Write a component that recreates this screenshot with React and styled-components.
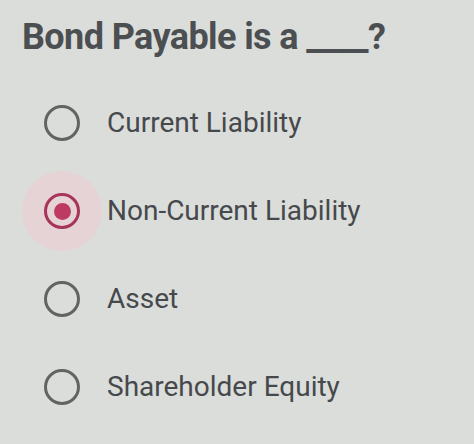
import styled, { createGlobalStyle } from "styled-components";

const GlobalStyle = createGlobalStyle`
    html, body {
        margin: 0;
        padding: 0;
        background: #dbddda;
    }
    body {
        font-family: Roboto, "Noto Sans", sans-serif;
    }
`;

const options = [
    { label: "Current Liability", selected: false },
    { label: "Non-Current Liability", selected: true },
    { label: "Asset", selected: false },
    { label: "Shareholder Equity", selected: false },
];

export default function App() {
    return (
        <>
            <GlobalStyle />
            <PAGE>
                <TITLE>Bond Payable is a ____?</TITLE>
                <OPTIONS>
                    {options.map((opt) => (
                        <ROW key={opt.label}>
                            <RADIO>
                                {opt.selected && <HALO />}
                                <RING selected={opt.selected}>
                                    {opt.selected && <DOT />}
                                </RING>
                            </RADIO>
                            <LABEL>{opt.label}</LABEL>
                        </ROW>
                    ))}
                </OPTIONS>
            </PAGE>
        </>
    );
}

const PAGE = styled.div`
    display: flex;
    flex-direction: column;
    width: 474px;
    height: 444px;
    padding: 16px 0 0 22px;
    box-sizing: border-box;
    overflow: hidden;
`;

const TITLE = styled.h1`
    margin: 0;
    font-size: 36px;
    line-height: 42px;
    font-weight: 700;
    letter-spacing: -0.6px;
    color: #4c4f52;
`;

const OPTIONS = styled.div`
    display: flex;
    flex-direction: column;
    margin-top: 21px;
`;

const ROW = styled.div`
    display: flex;
    align-items: center;
    height: 88px;
    padding-left: 22px;
`;

const RADIO = styled.div`
    position: relative;
    display: flex;
    align-items: center;
    justify-content: center;
    width: 36px;
    height: 36px;
    margin-right: 27px;
`;

const HALO = styled.div`
    position: absolute;
    left: -22px;
    top: -22px;
    width: 80px;
    height: 80px;
    border-radius: 50%;
    background: #e5d3d6;
`;

const RING = styled.div`
    position: relative;
    display: flex;
    align-items: center;
    justify-content: center;
    width: 36px;
    height: 36px;
    box-sizing: border-box;
    border-radius: 50%;
    border: 3.5px solid ${(p) => (p.selected ? "#a7345b" : "#606462")};
`;

const DOT = styled.div`
    width: 17px;
    height: 17px;
    border-radius: 50%;
    background: #bd3a62;
`;

const LABEL = styled.span`
    font-size: 28px;
    line-height: 34px;
    color: #46494c;
`;
